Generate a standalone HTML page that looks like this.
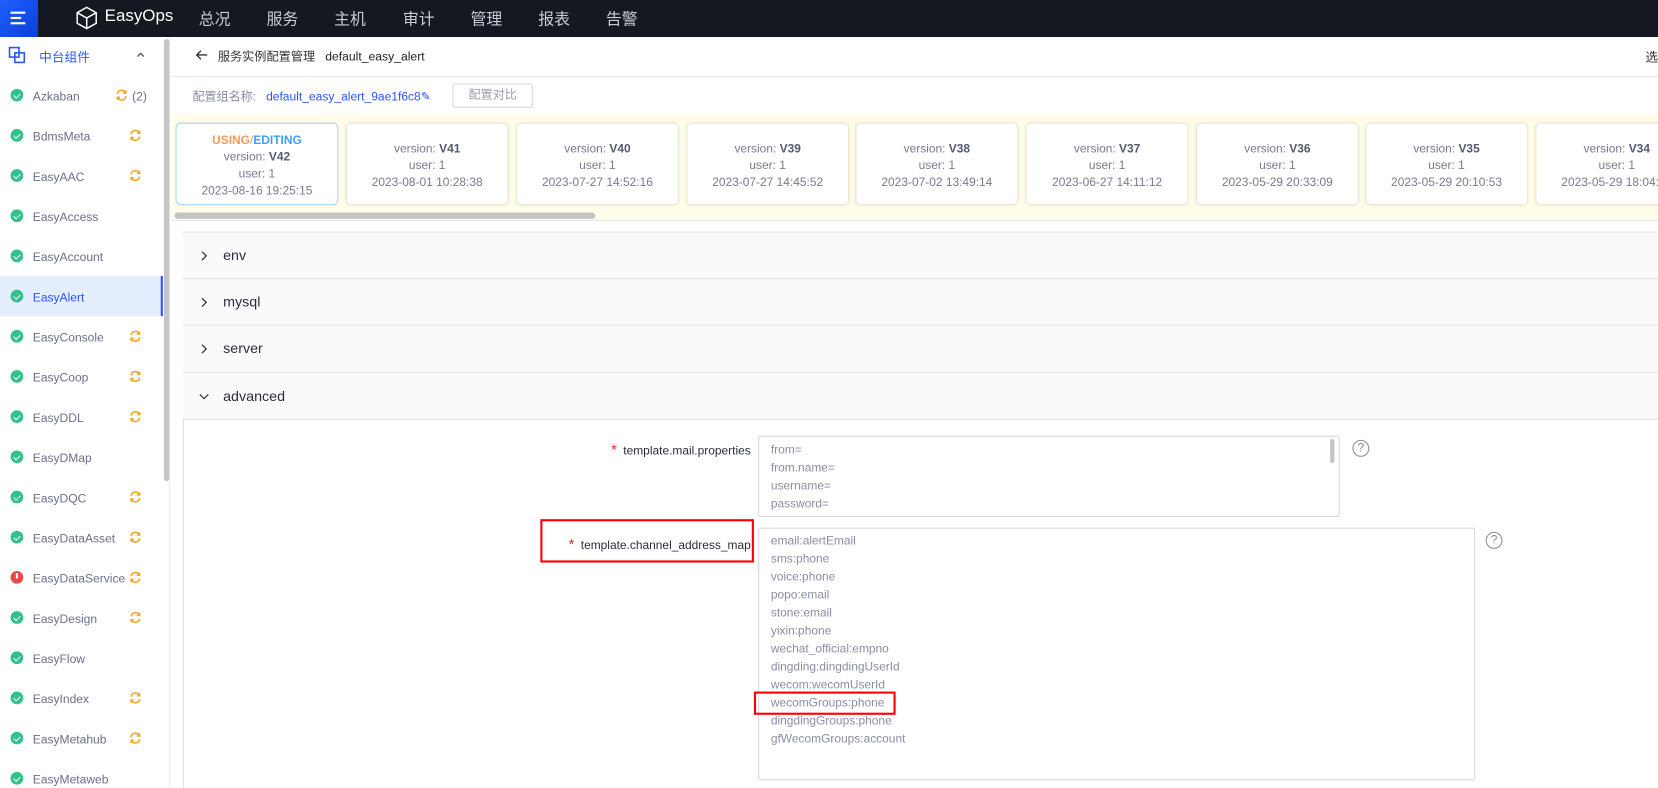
<!DOCTYPE html>
<html><head><meta charset="utf-8"><style>
*{box-sizing:border-box;margin:0;padding:0}
html,body{width:1658px;height:788px;overflow:hidden;background:#fff}
body{font-family:"Liberation Sans","Noto Sans CJK SC",sans-serif;font-size:11.4px;color:#333;position:relative}
#w{position:absolute;left:0;top:0;width:1568px;height:746px;transform:scale(1.05740);transform-origin:0 0;overflow:hidden}
.a{position:absolute}
.top{left:0;top:0;width:1568px;height:35px;background:#151821}
.menu{left:0;top:0;width:36px;height:35px;background:linear-gradient(135deg,#1f5fff,#0b3fd8)}
.nav{color:#c9ccd6;font-size:15px;top:7px}
.side{left:0;top:35px;width:161px;height:711px;background:#fff;border-right:1px solid #e8e8e8}
.item{position:absolute;left:0;width:152px;height:38px;font-size:11.4px;color:#6b6f8a;font-family:"Liberation Sans",sans-serif}
.item .d{position:absolute;left:10px;top:13px;width:12px;height:12px;border-radius:50%;background:#2fc28a}
.item .d:after{content:"";position:absolute;left:3.5px;top:2.5px;width:3px;height:5px;border:solid #fff;border-width:0 1.5px 1.5px 0;transform:rotate(45deg)}
.item .d.r{background:#e24c4c}
.item .d.r:after{left:5px;top:2px;width:2px;height:5px;border:none;background:#fff;transform:none}
.item .t{position:absolute;left:31px;top:1.5px;line-height:38px}
.item .s{position:absolute;left:109px;top:1.5px;line-height:38px;font-size:11.4px}
.item svg{position:absolute;left:122px;top:13px}
.card{position:absolute;top:117px;width:152px;height:76px;background:#fff;border-radius:4px;box-shadow:0 0 3px rgba(0,0,0,.18);text-align:center;color:#777b90;font-size:11.3px;line-height:16px;padding-top:16px}
.card b{color:#555a6e}
.row{position:absolute;left:173px;width:1395px;height:45px;background:#fafafa;border-top:1px solid #e0e0e0;font-size:13.5px;color:#2a2d3e}
.row span{position:absolute;left:38px;top:14px}
.row svg{position:absolute;left:17px;top:17px}
.ta{position:absolute;border:1px solid #d9d9d9;border-radius:2px;color:#8a8ea3;font-size:11.3px;line-height:17px;padding:4px 11px;background:#fff}
.lbl{position:absolute;font-size:11.3px;color:#2a2d3e;text-align:right}
.lbl em{color:#f5222d;font-style:normal;margin-right:6px;font-size:14px}
.q{position:absolute;width:16px;height:16px;border:1px solid #8c8c8c;border-radius:50%;color:#8c8c8c;font-size:11px;text-align:center;line-height:14px}
</style></head><body><div id="w">
<div class="a top"></div>
<div class="a menu"><div class="a" style="left:10px;top:11px;width:14px;height:2px;background:#fff"></div><div class="a" style="left:10px;top:16px;width:10px;height:2px;background:#fff"></div><div class="a" style="left:10px;top:21px;width:14px;height:2px;background:#fff"></div></div>
<svg class="a" style="left:70px;top:5px" width="24" height="24" viewBox="0 0 24 24" fill="none" stroke="#fff" stroke-width="1.4"><path d="M12 2 L21 7 L21 17 L12 22 L3 17 L3 7 Z M3 7 L12 12 L21 7 M12 12 L12 22"/></svg>
<div class="a" style="left:99px;top:7px;color:#fff;font-size:16px">EasyOps</div>
<div class="a nav" style="left:188px">总况</div>
<div class="a nav" style="left:252px">服务</div>
<div class="a nav" style="left:316px">主机</div>
<div class="a nav" style="left:381px">审计</div>
<div class="a nav" style="left:445px">管理</div>
<div class="a nav" style="left:509px">报表</div>
<div class="a nav" style="left:573px">告警</div>
<div class="a side"></div>
<div class="a" style="left:155px;top:37px;width:5px;height:418px;background:#c4c4c4;border-radius:3px"></div>
<svg class="a" style="left:8px;top:44px" width="16" height="16" viewBox="0 0 16 16" fill="none" stroke="#2b55ff" stroke-width="1.5"><rect x="1" y="1" width="9" height="9"/><rect x="6" y="6" width="9" height="9"/></svg>
<div class="a" style="left:37px;top:45px;color:#2b55ff;font-size:12px">中台组件</div>
<svg class="a" style="left:129px;top:49px" width="8" height="5" viewBox="0 0 8 5" fill="none" stroke="#555" stroke-width="1.3"><path d="M1 4.5 L4 1.5 L7 4.5"/></svg>
<svg width="0" height="0" style="position:absolute"><defs><symbol id="sy" viewBox="0 0 12 12"><path d="M2 5 A4 4 0 0 1 9.5 3.5 M10 1.5 L10 4 L7.5 4 M10 7 A4 4 0 0 1 2.5 8.5 M2 10.5 L2 8 L4.5 8" fill="none" stroke="#f5a623" stroke-width="1.5"/></symbol></defs></svg>
<div class="item" style="top:71px"><div class="d"></div><div class="t">Azkaban</div><svg width="12" height="12" style="left:109px"><use href="#sy"/></svg><div class="s" style="left:125px">(2)</div></div>
<div class="item" style="top:109px"><div class="d"></div><div class="t">BdmsMeta</div><svg width="12" height="12"><use href="#sy"/></svg></div>
<div class="item" style="top:147px"><div class="d"></div><div class="t">EasyAAC</div><svg width="12" height="12"><use href="#sy"/></svg></div>
<div class="item" style="top:185px"><div class="d"></div><div class="t">EasyAccess</div></div>
<div class="item" style="top:223px"><div class="d"></div><div class="t">EasyAccount</div></div>
<div class="item" style="top:261px;background:#e5eeff;border-right:2px solid #2b55ff;width:154px"><div class="d"></div><div class="t" style="color:#2b55ff">EasyAlert</div></div>
<div class="item" style="top:299px"><div class="d"></div><div class="t">EasyConsole</div><svg width="12" height="12"><use href="#sy"/></svg></div>
<div class="item" style="top:337px"><div class="d"></div><div class="t">EasyCoop</div><svg width="12" height="12"><use href="#sy"/></svg></div>
<div class="item" style="top:375px"><div class="d"></div><div class="t">EasyDDL</div><svg width="12" height="12"><use href="#sy"/></svg></div>
<div class="item" style="top:413px"><div class="d"></div><div class="t">EasyDMap</div></div>
<div class="item" style="top:451px"><div class="d"></div><div class="t">EasyDQC</div><svg width="12" height="12"><use href="#sy"/></svg></div>
<div class="item" style="top:489px"><div class="d"></div><div class="t">EasyDataAsset</div><svg width="12" height="12"><use href="#sy"/></svg></div>
<div class="item" style="top:527px"><div class="d r"></div><div class="t">EasyDataService</div><svg width="12" height="12"><use href="#sy"/></svg></div>
<div class="item" style="top:565px"><div class="d"></div><div class="t">EasyDesign</div><svg width="12" height="12"><use href="#sy"/></svg></div>
<div class="item" style="top:603px"><div class="d"></div><div class="t">EasyFlow</div></div>
<div class="item" style="top:641px"><div class="d"></div><div class="t">EasyIndex</div><svg width="12" height="12"><use href="#sy"/></svg></div>
<div class="item" style="top:679px"><div class="d"></div><div class="t">EasyMetahub</div><svg width="12" height="12"><use href="#sy"/></svg></div>
<div class="item" style="top:717px"><div class="d"></div><div class="t">EasyMetaweb</div></div>

<svg class="a" style="left:185px;top:47px" width="12" height="10" viewBox="0 0 12 10" fill="none" stroke="#333" stroke-width="1.3"><path d="M11 5 L1.5 5 M5 1 L1 5 L5 9"/></svg>
<div class="a" style="left:206px;top:45px;font-size:11.5px;color:#333">服务实例配置管理&nbsp;&nbsp;&nbsp;<span style="color:#1d1f2b">default_easy_alert</span></div>
<div class="a" style="left:1556px;top:45px;font-size:12px;color:#333">选</div>
<div class="a" style="left:162px;top:72px;width:1406px;height:1px;background:#e6e6e6"></div>
<div class="a" style="left:182px;top:83px;color:#8a8ea3">配置组名称:&nbsp;&nbsp;&nbsp;<span style="color:#2b55ff">default_easy_alert_9ae1f6c8✎</span></div>
<div class="a" style="left:428px;top:79px;width:76px;height:23px;border:1px solid #d9d9d9;border-radius:2px;color:#9a9da8;text-align:center;line-height:21px">配置对比</div>
<div class="a" style="left:162px;top:108px;width:1406px;height:101px;background:#fffde9;border-bottom:1px solid #e6e6e6"></div>
<div class="card" style="left:167px;padding-top:8px;box-shadow:0 0 0 1px #a9d4f5,0 0 3px rgba(0,0,0,.1)"><b style="color:#f79a5b">USING</b><b style="color:#f79a5b;font-weight:normal">/</b><b style="color:#40a0f0">EDITING</b><br>version: <b>V42</b><br>user: 1<br>2023-08-16 19:25:15</div>
<div class="card" style="left:328px">version: <b>V41</b><br>user: 1<br>2023-08-01 10:28:38</div>
<div class="card" style="left:489px">version: <b>V40</b><br>user: 1<br>2023-07-27 14:52:16</div>
<div class="card" style="left:650px">version: <b>V39</b><br>user: 1<br>2023-07-27 14:45:52</div>
<div class="card" style="left:810px">version: <b>V38</b><br>user: 1<br>2023-07-02 13:49:14</div>
<div class="card" style="left:971px">version: <b>V37</b><br>user: 1<br>2023-06-27 14:11:12</div>
<div class="card" style="left:1132px">version: <b>V36</b><br>user: 1<br>2023-05-29 20:33:09</div>
<div class="card" style="left:1292px">version: <b>V35</b><br>user: 1<br>2023-05-29 20:10:53</div>
<div class="card" style="left:1453px">version: <b>V34</b><br>user: 1<br>2023-05-29 18:04:21</div>
<div class="a" style="left:165px;top:201px;width:398px;height:6px;background:#c4c4c4;border-radius:3px"></div>

<div class="a" style="left:173px;top:219px;width:1px;height:530px;background:#e0e0e0"></div>
<div class="row" style="top:219px"><svg width="6" height="10" viewBox="0 0 6 10" fill="none" stroke="#333" stroke-width="1.2"><path d="M1 1 L5 5 L1 9"/></svg><span>env</span></div>
<div class="row" style="top:263px"><svg width="6" height="10" viewBox="0 0 6 10" fill="none" stroke="#333" stroke-width="1.2"><path d="M1 1 L5 5 L1 9"/></svg><span>mysql</span></div>
<div class="row" style="top:307px"><svg width="6" height="10" viewBox="0 0 6 10" fill="none" stroke="#333" stroke-width="1.2"><path d="M1 1 L5 5 L1 9"/></svg><span>server</span></div>
<div class="row" style="top:352px;border-bottom:1px solid #e0e0e0"><svg width="10" height="6" viewBox="0 0 10 6" fill="none" stroke="#333" stroke-width="1.2" style="left:15px;top:19px"><path d="M1 1 L5 5 L9 1"/></svg><span>advanced</span></div>

<div class="lbl" style="left:400px;top:417px;width:310px"><em>*</em>template.mail.properties</div>
<div class="ta" style="left:717px;top:412px;width:550px;height:77px;padding-top:5px">from=<br>from.name=<br>username=<br>password=</div>
<div class="a" style="left:1258px;top:415px;width:4px;height:23px;background:#c4c4c4;border-radius:2px"></div>
<div class="q" style="left:1279px;top:416px">?</div>
<div class="lbl" style="left:400px;top:506px;width:310px"><em>*</em>template.channel_address_map</div>
<div class="a" style="left:511px;top:491px;width:202px;height:41px;border:2px solid #ff0000"></div>
<div class="ta" style="left:717px;top:499px;width:678px;height:239px">email:alertEmail<br>sms:phone<br>voice:phone<br>popo:email<br>stone:email<br>yixin:phone<br>wechat_official:empno<br>dingding:dingdingUserId<br>wecom:wecomUserId<br>wecomGroups:phone<br>dingdingGroups:phone<br>gfWecomGroups:account</div>
<div class="a" style="left:713px;top:654px;width:134px;height:22px;border:2px solid #ff0000"></div>
<div class="q" style="left:1405px;top:503px">?</div>
</div></body></html>
